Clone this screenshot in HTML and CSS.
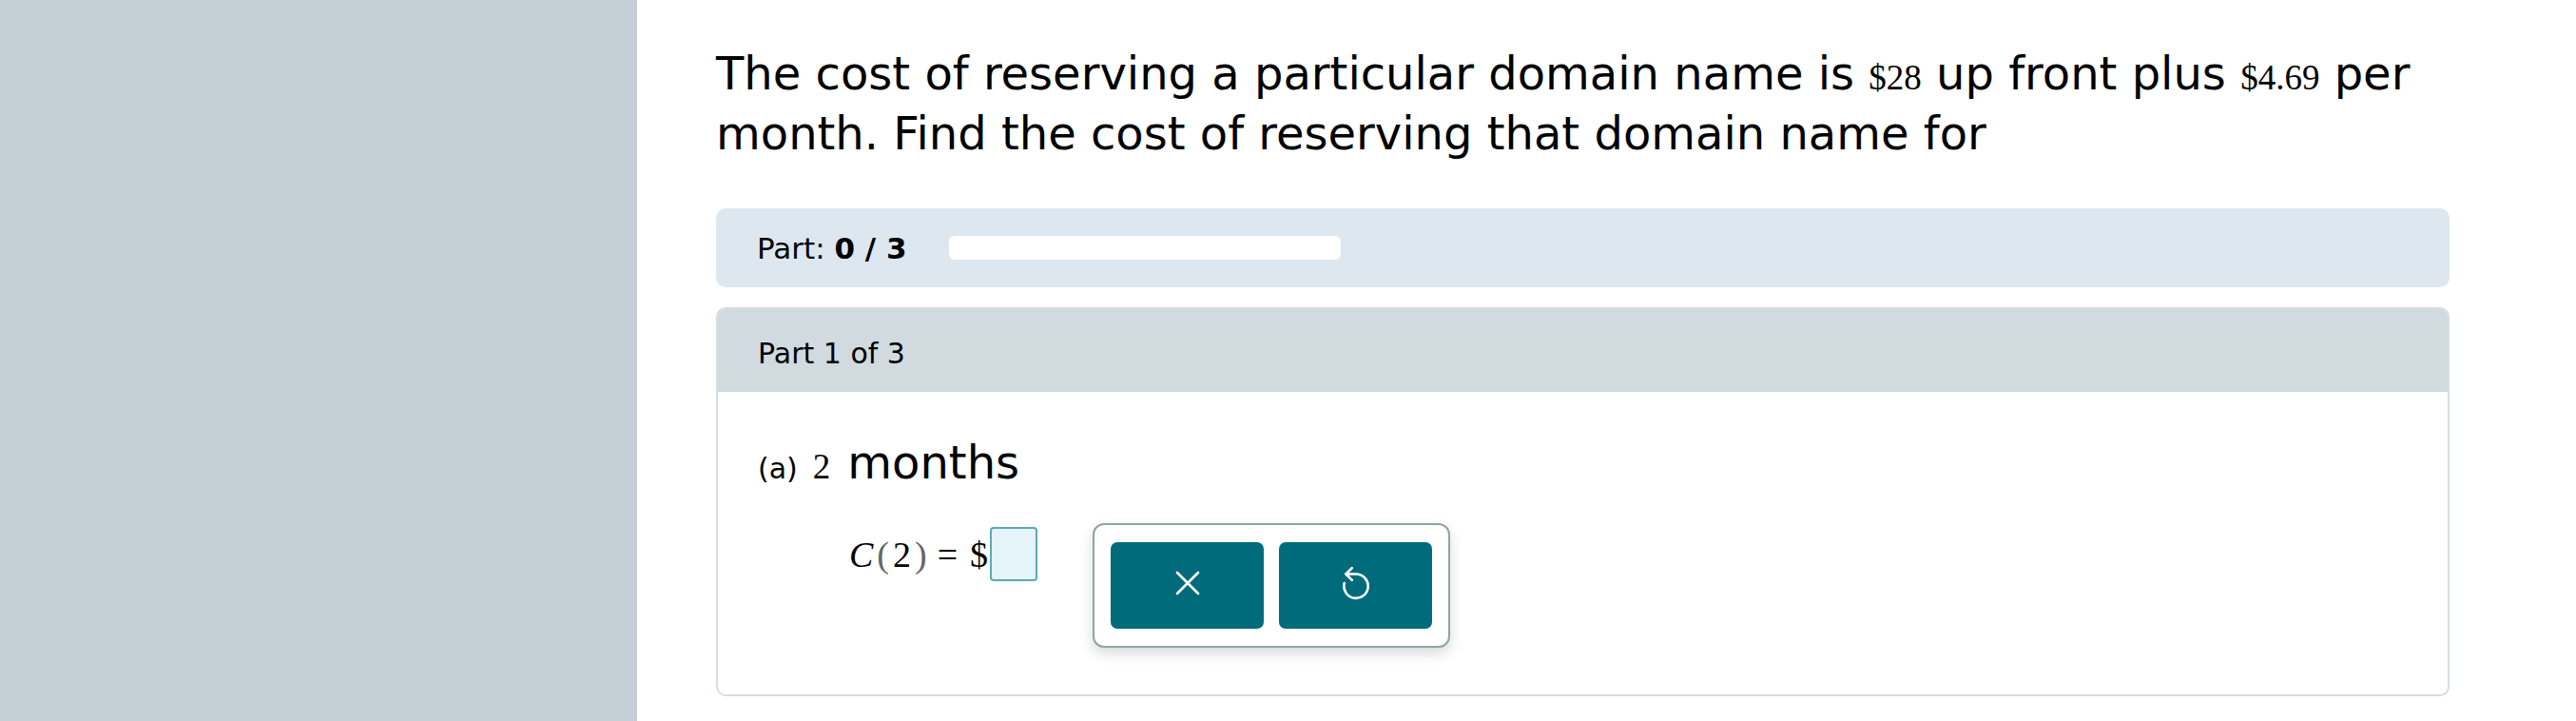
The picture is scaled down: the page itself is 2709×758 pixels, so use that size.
FILE: index.html
```html
<!DOCTYPE html>
<html lang="en">
<head>
  <meta charset="UTF-8">
  <title>Domain Name Cost</title>
  <link rel="stylesheet" href="styles.css">
</head>
<body>

  <div class="layout">
    <aside class="sidebar"></aside>

    <main class="content">
      <p class="question">The cost of reserving a particular domain name is <span class="math">$28</span> up front plus <span class="math">$4.69</span> per month. Find the cost of reserving that domain name for</p>

      <div class="progress-bar">
        <span class="progress-label">Part: <strong>0 / 3</strong></span>
        <div class="progress-track"></div>
      </div>

      <section class="part-card">
        <div class="part-header">Part 1 of 3</div>
        <div class="part-body">
          <div class="part-prompt">
            <span class="part-letter">(a)</span>
            <span class="math">2</span>
            <span class="unit">months</span>
          </div>

          <div class="answer-row">
            <div class="expr">
              <i>C</i><span class="paren">(</span><span class="arg">2</span><span class="paren">)</span><span class="eq">=</span><span class="dollar">$</span><span class="answer-box"></span>
            </div>

            <div class="keypad">
              <button class="key" title="Clear">
                <svg width="26" height="26" viewBox="0 0 26 26">
                  <path d="M2 2 L24 24 M24 2 L2 24" stroke="#fff" stroke-width="2.6" stroke-linecap="round"/>
                </svg>
              </button>
              <button class="key" title="Undo">
                <svg width="30" height="37" viewBox="0 0 28 35" fill="none" stroke="#fff" stroke-width="2.5" stroke-linecap="round" stroke-linejoin="round">
                  <path d="M10 3 L4 9 L10 15"/>
                  <path d="M4 9 H14 A12 12 0 1 1 2.4 18"/>
                </svg>
              </button>
            </div>
          </div>
        </div>
      </section>
    </main>
  </div>

</body>
</html>
```

FILE: styles.css
```css
body {
  margin: 0;
  font-family: "DejaVu Sans", Verdana, sans-serif;
  color: #000;
  background-color: #fff;
}
.layout {
  display: flex;
  min-height: 758px;
}
.sidebar {
  width: 670px;
  flex-shrink: 0;
  background-color: #c2d0d5;
}
.content {
  flex: 1;
  padding: 46px 133px 0 83px;
}
.question {
  margin: 0;
  font-size: 48px;
  line-height: 63px;
}
.math {
  font-family: "Liberation Serif", "Times New Roman", serif;
  font-size: 37px;
  line-height: 1;
}

/* progress */
.progress-bar {
  margin-top: 47px;
  height: 83px;
  box-sizing: border-box;
  padding-left: 43px;
  display: flex;
  align-items: center;
  background-color: #dce7ef;
  border-radius: 10px;
}
.progress-label {
  font-size: 31px;
}
.progress-track {
  width: 412px;
  height: 25px;
  margin-left: 44px;
  background-color: #fff;
  border-radius: 6px;
}

/* part card */
.part-card {
  margin-top: 21px;
  border: 2px solid #d7dee1;
  border-radius: 10px;
  overflow: hidden;
}
.part-header {
  height: 87px;
  box-sizing: border-box;
  padding: 6px 0 0 42px;
  display: flex;
  align-items: center;
  font-size: 30px;
  background-color: #d1dbdf;
}
.part-body {
  padding: 46px 0 49px 42px;
}
.part-prompt {
  display: flex;
  align-items: baseline;
  line-height: 56px;
}
.part-letter {
  font-size: 30px;
}
.part-prompt .math {
  margin-left: 16px;
}
.unit {
  margin-left: 18px;
  font-size: 48px;
}

.answer-row {
  display: flex;
  align-items: flex-start;
  margin-top: 29px;
  padding-left: 96px;
}
.expr {
  display: flex;
  align-items: center;
  height: 57px;
  margin-top: 4px;
  font-family: "Liberation Serif", "Times New Roman", serif;
  font-size: 38px;
}
.expr i {
  margin-right: 4px;
}
.paren {
  color: #666;
}
.arg {
  margin: 0 4px;
}
.eq {
  margin-left: 11px;
}
.dollar {
  margin-left: 13px;
}
.answer-box {
  width: 50px;
  height: 57px;
  box-sizing: border-box;
  margin-left: 2px;
  border: 2px solid #5aa9b7;
  border-radius: 4px;
  background-color: #e5f4f8;
}

/* keypad popup */
.keypad {
  display: flex;
  gap: 16px;
  margin-left: 58px;
  padding: 18px 17px;
  background-color: #fff;
  border: 2px solid #8fa3aa;
  border-radius: 12px;
  box-shadow: 0 6px 14px rgba(0,0,0,0.15);
}
.key {
  width: 161px;
  height: 91px;
  padding: 0 0 6px;
  display: flex;
  justify-content: center;
  align-items: center;
  background-color: #006b7b;
  border: none;
  border-radius: 7px;
  cursor: pointer;
}
```
